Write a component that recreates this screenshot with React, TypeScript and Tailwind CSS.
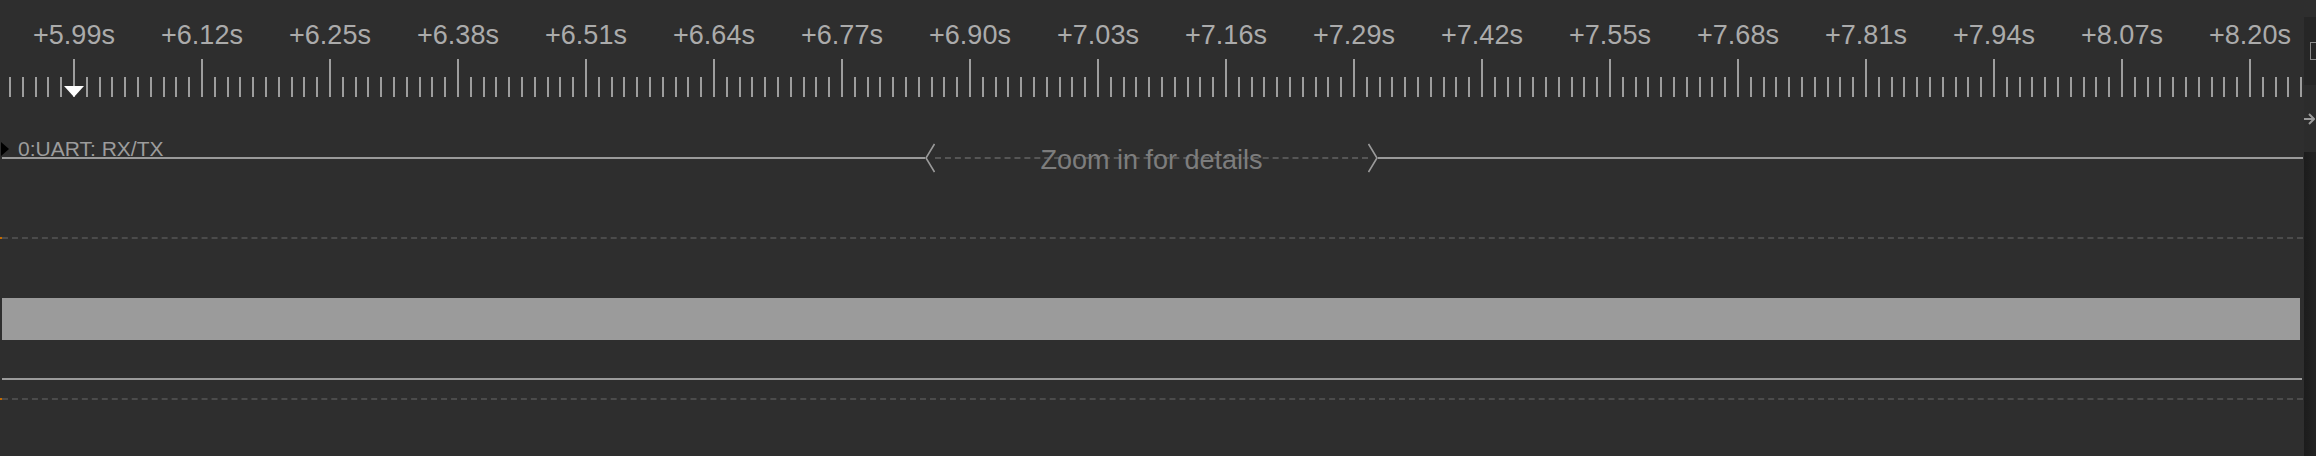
import React from "react";

const labels = [
  "+5.99s", "+6.12s", "+6.25s", "+6.38s", "+6.51s", "+6.64s", "+6.77s", "+6.90s", "+7.03s",
  "+7.16s", "+7.29s", "+7.42s", "+7.55s", "+7.68s", "+7.81s", "+7.94s", "+8.07s", "+8.20s",
];

function Ruler() {
  const ticks: React.ReactNode[] = [];
  for (let j = -5; j <= 174; j++) {
    const x = 74 + j * 12.8;
    const major = j % 10 === 0;
    ticks.push(
      <rect
        key={j}
        x={Math.round(x) - 1}
        y={major ? 9 : 27}
        width={2}
        height={major ? 38 : 20}
        fill="#9e9e9e"
      />
    );
  }
  return (
    <svg width={2304} height={50} className="block">
      {ticks}
      <polygon points="64,36 84,36 74,47" fill="#ffffff" />
    </svg>
  );
}

function Dashed() {
  return (
    <div className="flex items-center h-[2px]">
      <div className="w-[2px] h-[2px] bg-[#c46a00]" />
      <div className="flex-1 h-[2px] border-t-2 border-dashed border-[#4b4b4b] mr-[1px]" />
    </div>
  );
}

export default function App() {
  return (
    <div
      className="w-[2316px] h-[456px] bg-[#2e2e2e] flex overflow-hidden"
      style={{ fontFamily: '"Liberation Sans", Arial, sans-serif' }}
    >
      <div className="w-[2304px] flex flex-col">
        {/* time labels */}
        <div className="flex pt-[20px] pl-[10px] h-[50px]">
          {labels.map((l) => (
            <div key={l} className="w-[128px] shrink-0 text-center text-[27px] leading-[30px] text-[#ababab]">
              {l}
            </div>
          ))}
        </div>
        <Ruler />

        {/* track row */}
        <div className="relative h-[40px] mt-[38px]">
          <div className="absolute left-0 top-[2px] flex items-center gap-[8px]">
            <svg width={10} height={14} className="block">
              <polygon points="1,0 9,7 1,14" fill="#000000" />
            </svg>
            <span className="text-[21px] leading-[18px] text-[#9c9c9c]">0:UART: RX/TX</span>
          </div>
          <div className="flex items-center h-full pl-[2px]">
            <div className="w-[923px] h-[2px] bg-[#9a9a9a]" />
            <svg width={10} height={30} className="block">
              <path d="M9.5 1 L1 15 L9.5 29" stroke="#9a9a9a" strokeWidth={1.6} fill="none" />
            </svg>
            <div className="relative w-[433px] h-full flex items-center justify-center">
              <div className="absolute left-0 right-0 top-1/2 -translate-y-1/2 border-t-2 border-dashed border-[#565656]" />
              <span className="relative top-[2px] text-[27px] leading-[28px] text-[#7d7d7d]">Zoom in for details</span>
            </div>
            <svg width={10} height={30} className="block">
              <path d="M0.5 1 L9 15 L0.5 29" stroke="#9a9a9a" strokeWidth={1.6} fill="none" />
            </svg>
            <div className="flex-1 h-[2px] bg-[#9a9a9a] mr-[1px]" />
          </div>
        </div>

        <div className="mt-[59px]">
          <Dashed />
        </div>

        <div className="mt-[59px] ml-[2px] mr-[4px] h-[42px] bg-[#9b9b9b]" />

        <div className="mt-[38px] ml-[2px] mr-[2px] h-[2px] bg-[#9b9b9b]" />

        <div className="mt-[18px]">
          <Dashed />
        </div>
      </div>

      {/* divider */}
      <div className="w-[1px] bg-[#474747]" />

      {/* right cropped panel */}
      <div className="flex-1 flex flex-col">
        <div className="h-[17px] bg-[#2e2e2e]" />
        <div className="h-[68px] bg-[#262626] flex items-center pl-[6px]">
          <div className="w-[6px] h-[18px] border border-r-0 border-[#8a8a8a]" />
        </div>
        <div className="h-[67px] bg-[#2c2c2c] flex items-center">
          <svg width={11} height={12} className="block">
            <path d="M0 6 L10 6 M5 1 L10 6 L5 11" stroke="#9a9a9a" strokeWidth={2} fill="none" />
          </svg>
        </div>
        <div className="flex-1 bg-gradient-to-r from-[#1c1c1c] to-[#232323]" />
      </div>
    </div>
  );
}
